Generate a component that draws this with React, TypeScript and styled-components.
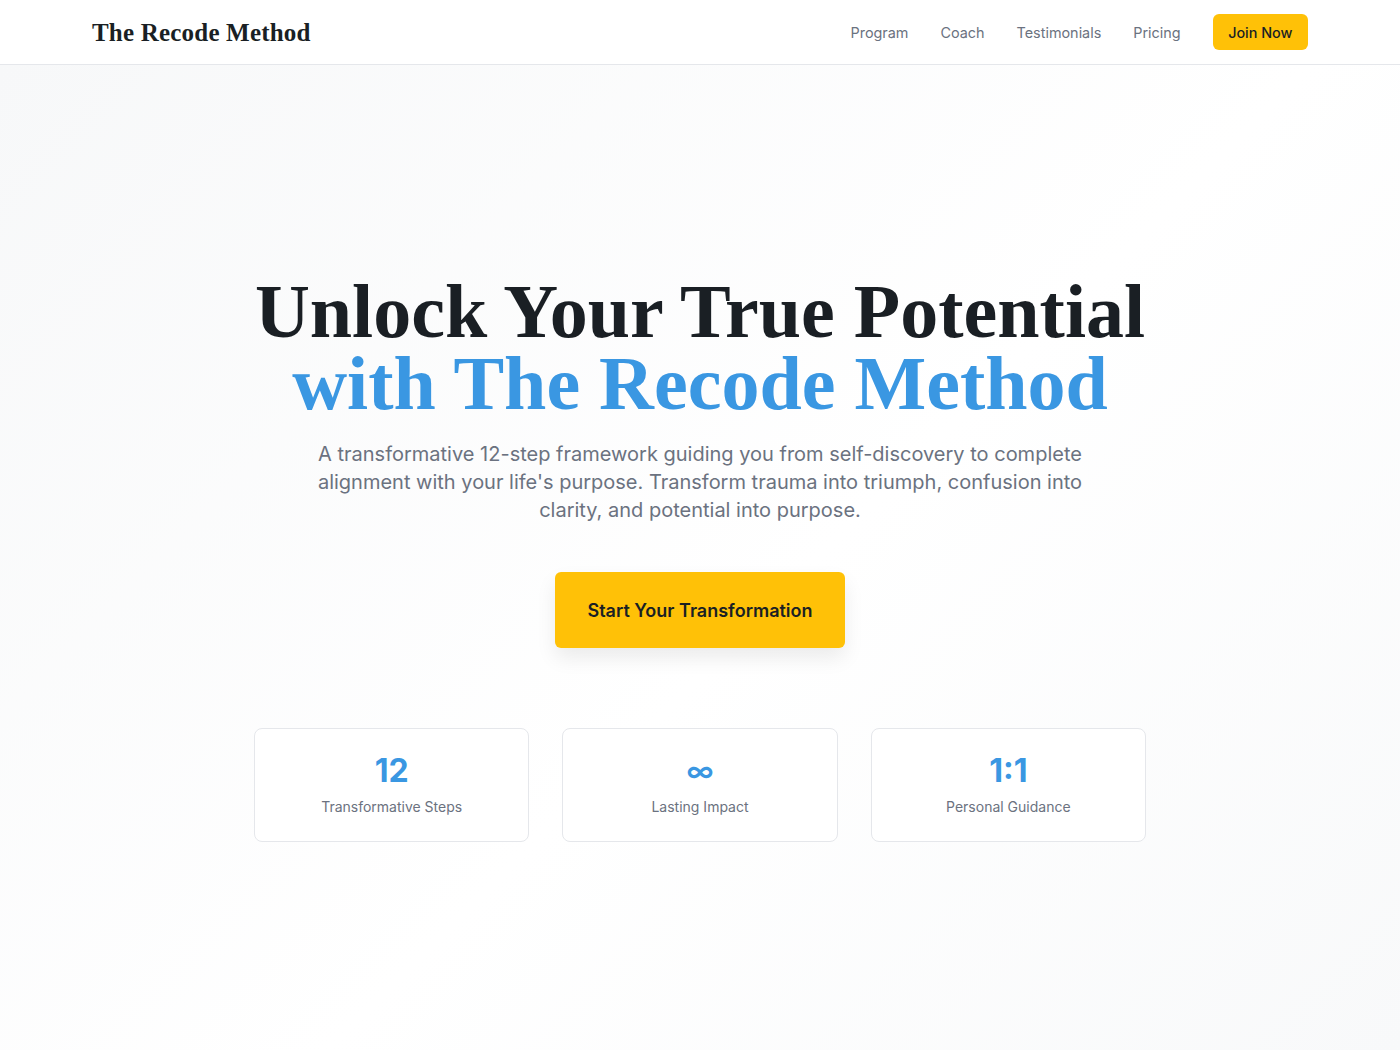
import styled, { createGlobalStyle } from 'styled-components';

const GlobalStyle = createGlobalStyle`
  * { box-sizing: border-box; }
  body {
    margin: 0;
    font-family: Inter, 'Noto Sans', sans-serif;
    color: #1a1f24;
    background: #ffffff;
  }
`;

const serif = `'Liberation Serif', 'DejaVu Serif', serif`;

const Header = styled.header`
  height: 65px;
  background: #ffffff;
  border-bottom: 1px solid #e5e7eb;
`;

const NavInner = styled.div`
  max-width: 1280px;
  height: 100%;
  margin: 0 auto;
  padding: 0 32px;
  display: flex;
  align-items: center;
  justify-content: space-between;
`;

const Logo = styled.a`
  font-family: ${serif};
  font-weight: 700;
  font-size: 25px;
  color: #1a1f24;
  text-decoration: none;
  letter-spacing: 0.2px;
  padding-top: 2px;
`;

const NavLinks = styled.nav`
  display: flex;
  align-items: center;
  gap: 32px;
`;

const NavLink = styled.a`
  font-size: 14.4px;
  color: #6b7280;
  text-decoration: none;
`;

const Button = styled.a<{ $big?: boolean }>`
  display: inline-flex;
  align-items: center;
  justify-content: center;
  background: #ffc107;
  color: #1a1f24;
  text-decoration: none;
  border-radius: 6px;
  font-weight: ${(p) => (p.$big ? 600 : 500)};
  font-size: ${(p) => (p.$big ? '18px' : '14.4px')};
  height: ${(p) => (p.$big ? '76px' : '36px')};
  padding: ${(p) => (p.$big ? '0 32px' : '0 15.5px')};
  box-shadow: ${(p) => (p.$big ? '0 10px 20px rgba(0, 0, 0, 0.08)' : 'none')};
`;

const Hero = styled.section`
  min-height: calc(100vh - 65px);
  background: linear-gradient(135deg, #f7f8f9 0%, #ffffff 55%, #f8f9fa 100%);
  display: flex;
  align-items: center;
  justify-content: center;
  padding: 62px 32px 60px;
`;

const HeroInner = styled.div`
  max-width: 892px;
  width: 100%;
  display: flex;
  flex-direction: column;
  align-items: center;
  text-align: center;
`;

const Title = styled.h1`
  margin: 0;
  font-family: ${serif};
  font-weight: 700;
  font-size: 76px;
  line-height: 72px;
  color: #1a1f24;
  white-space: nowrap;
`;

const Accent = styled.span`
  display: block;
  color: #3a97e2;
`;

const Lead = styled.p`
  margin: 21px 0 0;
  max-width: 770px;
  font-size: 20px;
  line-height: 28px;
  color: #6b7280;
`;

const Actions = styled.div`
  margin-top: 48px;
`;

const Stats = styled.div`
  margin-top: 80px;
  width: 100%;
  display: grid;
  grid-template-columns: repeat(3, 1fr);
  gap: 33px;
`;

const StatCard = styled.div`
  background: #ffffff;
  border: 1px solid #e5e7eb;
  border-radius: 8px;
  padding: 24px;
  display: flex;
  flex-direction: column;
  align-items: center;
`;

const StatValue = styled.div<{ $glyph?: boolean }>`
  font-size: ${(p) => (p.$glyph ? '28px' : '32px')};
  line-height: 36px;
  font-weight: ${(p) => (p.$glyph ? 600 : 700)};
  color: #3a97e2;
`;

const StatLabel = styled.div`
  margin-top: 8px;
  font-size: 14px;
  line-height: 20px;
  color: #6b7280;
`;

const stats = [
  { value: '12', label: 'Transformative Steps' },
  { value: '∞', label: 'Lasting Impact', glyph: true },
  { value: '1:1', label: 'Personal Guidance' },
];

export default function App() {
  return (
    <>
      <GlobalStyle />
      <Header>
        <NavInner>
          <Logo href="#">The Recode Method</Logo>
          <NavLinks>
            <NavLink href="#">Program</NavLink>
            <NavLink href="#">Coach</NavLink>
            <NavLink href="#">Testimonials</NavLink>
            <NavLink href="#">Pricing</NavLink>
            <Button href="#">Join Now</Button>
          </NavLinks>
        </NavInner>
      </Header>
      <Hero>
        <HeroInner>
          <Title>
            Unlock Your True Potential
            <Accent>with The Recode Method</Accent>
          </Title>
          <Lead>
            A transformative 12-step framework guiding you from self-discovery to complete
            alignment with your life's purpose. Transform trauma into triumph, confusion into
            clarity, and potential into purpose.
          </Lead>
          <Actions>
            <Button $big href="#">
              Start Your Transformation
            </Button>
          </Actions>
          <Stats>
            {stats.map((s) => (
              <StatCard key={s.label}>
                <StatValue $glyph={s.glyph}>{s.value}</StatValue>
                <StatLabel>{s.label}</StatLabel>
              </StatCard>
            ))}
          </Stats>
        </HeroInner>
      </Hero>
    </>
  );
}
